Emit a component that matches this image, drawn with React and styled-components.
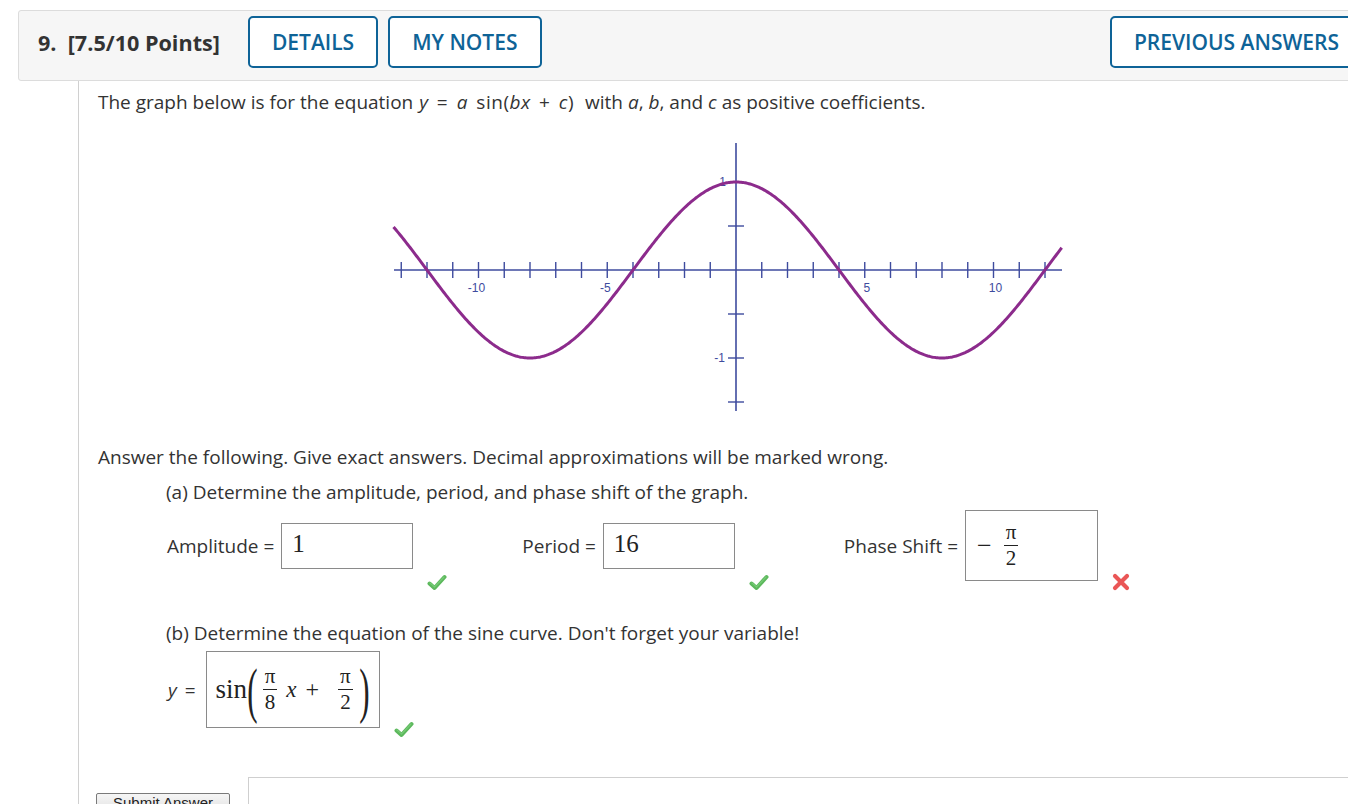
import React from "react";
import styled, { createGlobalStyle } from "styled-components";

const GlobalStyle = createGlobalStyle`
  html, body {
    margin: 0;
    padding: 0;
    overflow: hidden;
    background: #fff;
  }
  body {
    font-family: "Open Sans", "Liberation Sans", sans-serif;
    color: #333;
  }
`;

const Page = styled.div`
  width: 1362px;
  padding: 10px 0 0 18px;
`;

const Header = styled.div`
  display: flex;
  align-items: center;
  box-sizing: border-box;
  height: 71px;
  padding: 0 16px 7px 19px;
  background: #f6f6f6;
  border: 1px solid #dcdcdc;
  border-radius: 3px;
`;

const Title = styled.div`
  font-size: 21.6px;
  font-weight: 700;
  color: #333;
  margin-right: 28px;
  white-space: nowrap;
`;

const HeaderButton = styled.div`
  box-sizing: border-box;
  height: 52px;
  padding: 0 22px;
  display: flex;
  align-items: center;
  border: 2px solid #0e6397;
  border-radius: 5px;
  background: #fff;
  color: #0e6397;
  font-size: 21px;
  font-weight: 600;
  white-space: nowrap;
  margin-right: ${(p) => (p.$push ? "0" : "10px")};
  margin-left: ${(p) => (p.$push ? "auto" : "0")};
`;

const Body = styled.div`
  margin-left: 60px;
  border-left: 1px solid #d0d0d0;
  padding: 9px 0 0 19px;
`;

const Line = styled.div`
  font-size: 19px;
  line-height: 24px;
  color: #333;
  white-space: nowrap;
  margin-top: ${(p) => p.$top || 0}px;
  margin-left: ${(p) => p.$indent || 0}px;
`;

const Expr = styled.span`
  letter-spacing: 0.5px;
  word-spacing: 3px;
  margin: 0 6px 0 1px;
`;

const GraphWrap = styled.div`
  margin: 26px 0 0 292px;
  height: 275px;
`;

const FieldRow = styled.div`
  display: flex;
  align-items: center;
  gap: 75px;
  margin: 6px 0 0 69px;
`;

const Field = styled.div`
  display: flex;
  align-items: center;
  align-self: stretch;
`;

const Label = styled.span`
  font-size: 19px;
  color: #333;
  margin-right: ${(p) => p.$gap || 7}px;
  white-space: nowrap;
`;

const AnswerBox = styled.div`
  box-sizing: border-box;
  width: ${(p) => p.$w}px;
  height: ${(p) => p.$h}px;
  border: 1px solid #8a8a8a;
  display: flex;
  align-items: center;
  padding-left: ${(p) => p.$pad || 10}px;
  padding-bottom: ${(p) => p.$pb || 0}px;
  font-family: "Liberation Serif", "DejaVu Serif", serif;
  font-size: ${(p) => p.$fs || 25}px;
  color: #222;
`;

const Mark = styled.span`
  align-self: flex-end;
  margin: 0 0 -10px ${(p) => p.$gap || 14}px;
  display: inline-flex;
`;

const Frac = styled.span`
  display: inline-flex;
  flex-direction: column;
  align-items: center;
  font-size: 21px;
  line-height: 1;
  margin: 0 ${(p) => p.$mr || 2}px 0 ${(p) => p.$ml || 2}px;
`;

const Num = styled.span`
  padding: 0 2px 2px;
  border-bottom: 1px solid #222;
`;

const Den = styled.span`
  padding-top: 2px;
`;

const Paren = styled.span`
  display: inline-block;
  font-size: 62px;
  line-height: 1;
  font-weight: 300;
  transform: scaleX(0.5);
  margin: 0 -5px;
  color: #222;
`;

const MathVar = styled.span`
  font-style: italic;
  font-size: 23px;
`;

const Var = styled.span`
  font-style: italic;
  margin-right: ${(p) => p.$mr || 0}px;
`;

const Op = styled.span`
  font-size: ${(p) => p.$fs || 24}px;
  margin: 0 ${(p) => p.$m || 0}px;
`;

const EqRow = styled.div`
  display: flex;
  align-items: center;
  margin: 6px 0 0 70px;
`;

const Footer = styled.div`
  display: flex;
  align-items: flex-start;
  margin: 49px 0 0 -2px;
`;

const SubmitButton = styled.button`
  margin-top: 16px;
  width: 134px;
  height: 26px;
  padding: 1px 0 0;
  font-family: "Liberation Sans", sans-serif;
  font-size: 15px;
  color: #222;
  background: linear-gradient(#f6f6f6, #dadada);
  border: 1px solid #7a7a7a;
  border-radius: 2px;
  line-height: 16px;
  display: flex;
  justify-content: center;
  align-items: flex-start;
`;

const NoteBox = styled.div`
  margin-left: 18px;
  flex: 1;
  height: 120px;
  border: 1px solid #cfcfcf;
`;

function Check() {
  return (
    <svg width="20" height="17" viewBox="0 0 20 17">
      <path d="M2.5 9.5 L7.5 14 L17.5 3" fill="none" stroke="#5cb85c" strokeWidth="4" strokeLinecap="round" strokeLinejoin="round" />
      <path d="M3 9 L7.5 13 L17 3" fill="none" stroke="#7fd17f" strokeWidth="1.2" strokeLinecap="round" strokeLinejoin="round" opacity="0.7" />
    </svg>
  );
}

function Cross() {
  return (
    <svg width="18" height="18" viewBox="0 0 18 18">
      <path d="M3 3 L15 15 M15 3 L3 15" stroke="#ea5656" strokeWidth="4.2" strokeLinecap="round" />
    </svg>
  );
}

function Graph() {
  const ox = 346;
  const oy = 130;
  const sx = 25.75;
  const sy = 88;
  const axis = "#3e4b9e";
  const pts = [];
  for (let u = -13.3; u <= 12.66; u += 0.05) {
    pts.push(`${(ox + u * sx).toFixed(2)},${(oy - Math.cos((Math.PI * u) / 8) * sy).toFixed(2)}`);
  }
  const xticks = [];
  for (let u = -13; u <= 12; u++) {
    if (u !== 0) xticks.push(u);
  }
  const yticks = [1, 0.5, -0.5, -1, -1.5];
  const xlabels = [-10, -5, 5, 10];
  return (
    <svg width="680" height="275" viewBox="0 0 680 275">
      <line x1="4" y1={oy} x2="672" y2={oy} stroke={axis} strokeWidth="1.6" />
      <line x1={ox} y1="3" x2={ox} y2="271" stroke={axis} strokeWidth="1.6" />
      {xticks.map((u) => (
        <line key={u} x1={ox + u * sx} y1={oy - 8} x2={ox + u * sx} y2={oy + 8} stroke={axis} strokeWidth="1.4" />
      ))}
      {yticks.map((v) => (
        <line key={v} x1={ox - 8} y1={oy - v * sy} x2={ox + 8} y2={oy - v * sy} stroke={axis} strokeWidth="1.4" />
      ))}
      {xlabels.map((u) => (
        <text
          key={u}
          x={ox + u * sx + (u > 0 ? 2 : -2)}
          y={oy + 22}
          fontSize="12"
          fontFamily="Liberation Sans, sans-serif"
          fill={axis}
          textAnchor="middle"
        >
          {u}
        </text>
      ))}
      <text x={ox - 10} y={oy - sy + 4} fontSize="12" fontFamily="Liberation Sans, sans-serif" fill={axis} textAnchor="end">1</text>
      <text x={ox - 11} y={oy + sy + 4} fontSize="12" fontFamily="Liberation Sans, sans-serif" fill={axis} textAnchor="end">-1</text>
      <polyline points={pts.join(" ")} fill="none" stroke="#8c2b8c" strokeWidth="3" strokeLinejoin="round" />
    </svg>
  );
}

export default function App() {
  return (
    <>
      <GlobalStyle />
      <Page>
        <Header>
          <Title>9.&nbsp; [7.5/10 Points]</Title>
          <HeaderButton>DETAILS</HeaderButton>
          <HeaderButton>MY NOTES</HeaderButton>
          <HeaderButton $push>PREVIOUS ANSWERS</HeaderButton>
        </Header>
        <Body>
          <Line>
            The graph below is for the equation{" "}
            <Expr>
              <Var>y</Var> = <Var>a</Var> sin(<Var>bx</Var> + <Var>c</Var>)
            </Expr>{" "}
            with <Var>a</Var>, <Var>b</Var>, and <Var>c</Var> as positive coefficients.
          </Line>
          <GraphWrap>
            <Graph />
          </GraphWrap>
          <Line $top={30}>Answer the following. Give exact answers. Decimal approximations will be marked wrong.</Line>
          <Line $top={11} $indent={68}>(a) Determine the amplitude, period, and phase shift of the graph.</Line>
          <FieldRow>
            <Field>
              <Label>Amplitude =</Label>
              <AnswerBox $w={132} $h={46} $pb={4}>1</AnswerBox>
              <Mark $gap={14}><Check /></Mark>
            </Field>
            <Field>
              <Label>Period =</Label>
              <AnswerBox $w={132} $h={46} $pb={4}>16</AnswerBox>
              <Mark $gap={14}><Check /></Mark>
            </Field>
            <Field>
              <Label>Phase Shift =</Label>
              <AnswerBox $w={133} $h={71} $pad={11}>
                <Op $fs={26}>−</Op>
                <Frac $ml={12} $mr={2}>
                  <Num>π</Num>
                  <Den>2</Den>
                </Frac>
              </AnswerBox>
              <Mark $gap={14}><Cross /></Mark>
            </Field>
          </FieldRow>
          <Line $top={40} $indent={68}>(b) Determine the equation of the sine curve. Don't forget your variable!</Line>
          <EqRow>
            <Label $gap={10}>
              <Var $mr={3}>y</Var> =
            </Label>
            <AnswerBox $w={174} $h={77} $pad={9} $fs={27}>
              sin
              <Paren>(</Paren>
              <Frac $ml={5} $mr={9}>
                <Num>π</Num>
                <Den>8</Den>
              </Frac>
              <MathVar>x</MathVar>
              <Op $m={9}>+</Op>
              <Frac $ml={10} $mr={6}>
                <Num>π</Num>
                <Den>2</Den>
              </Frac>
              <Paren>)</Paren>
            </AnswerBox>
            <Mark $gap={14}><Check /></Mark>
          </EqRow>
          <Footer>
            <SubmitButton>Submit Answer</SubmitButton>
            <NoteBox />
          </Footer>
        </Body>
      </Page>
    </>
  );
}
